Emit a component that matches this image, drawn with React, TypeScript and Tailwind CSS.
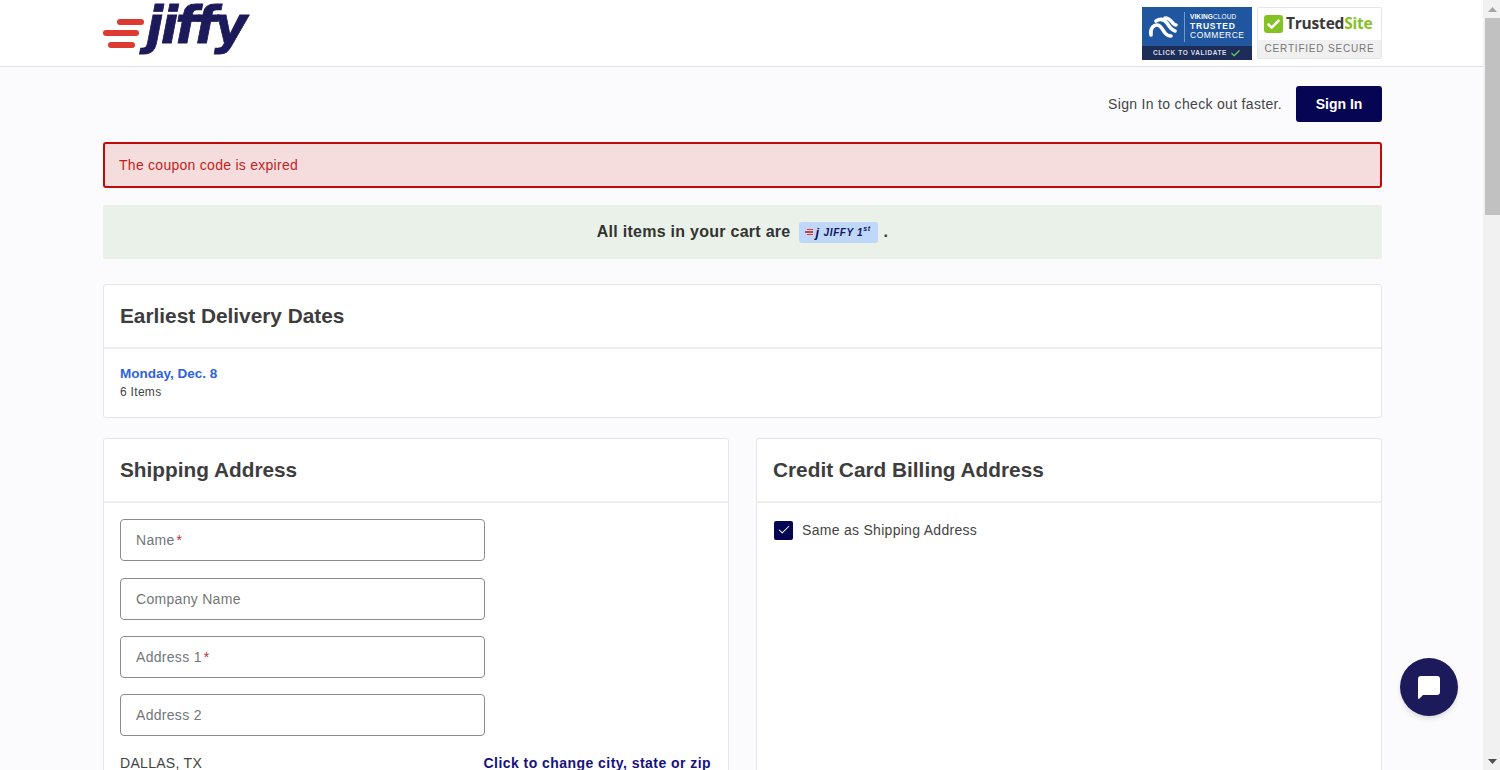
import { Check } from 'lucide-react'

function VikingBadge(): JSX.Element {
  return (
    <div className="w-[110px] h-[53px] flex flex-col bg-[#20569f]">
      <div className="h-[39px] flex items-center pl-[6px]">
        <svg className="w-[31px] h-[24px]" viewBox="0 0 31 24" fill="none" stroke="#fff" strokeWidth="3.6" strokeLinecap="round">
          <path d="M3 20C2 14 5 10 9 10c4 0 5 4 8 8 2 2.500 4 3 6 3" />
          <path d="M8 6c4-2.500 8-2 11 2 2 3 4 7 8 8" />
          <path d="M17 3c3 0 5 1.500 7 4 1.500 2 2.500 3 4 3" />
        </svg>
        <div className="w-px h-[30px] bg-[#6f9bd3] ml-[5px] mr-[5px]" />
        <div className="flex flex-col text-white leading-none">
          <span className="text-[6.500px] font-bold tracking-[0.1px]">
            VIKING<span className="font-normal">CLOUD</span>
          </span>
          <span className="text-[8.500px] font-bold tracking-[0.8px] mt-[2px]">TRUSTED</span>
          <span className="text-[8.500px] tracking-[0.5px]">COMMERCE</span>
        </div>
      </div>
      <div className="h-[14px] bg-[#1d2d57] flex items-center justify-center gap-[3px] text-[#d9dee8] text-[6.500px] font-bold tracking-[0.6px]">
        CLICK TO VALIDATE
        <Check className="w-[11px] h-[11px] text-[#5fc26a]" strokeWidth={3} />
      </div>
    </div>
  )
}

function TrustedSiteBadge(): JSX.Element {
  return (
    <div className="w-[125px] h-[52px] flex flex-col bg-white border border-[#e6e6e6] rounded-[2px]">
      <div className="h-[32px] shrink-0 flex items-center pl-[6px] gap-[3px]">
        <div className="w-[19px] h-[18px] rounded-[3px] bg-[#84c225] flex items-center justify-center">
          <Check className="w-[15px] h-[15px] text-white" strokeWidth={4} />
        </div>
        <span className="text-[15.500px] font-bold tracking-[-0.2px] whitespace-nowrap text-[#3a3a3a] font-['Open_Sans',sans-serif]">
          Trusted<span className="text-[#84c225]">Site</span>
        </span>
      </div>
      <div className="flex-1 bg-[#f0f0f0] flex items-center justify-center whitespace-nowrap text-[10px] tracking-[0.8px] text-[#777] pb-[1px]">
        CERTIFIED SECURE
      </div>
    </div>
  )
}

function Logo(): JSX.Element {
  return (
    <div className="flex items-center">
      <div className="flex flex-col gap-[5.500px] w-[41px] shrink-0">
        <div className="w-[27px] h-[6px] rounded-full bg-[#dd3b32] ml-[14px]" />
        <div className="w-[36px] h-[6px] rounded-full bg-[#dd3b32]" />
        <div className="w-[27px] h-[6px] rounded-full bg-[#dd3b32] ml-[5px]" />
      </div>
      <span className="text-[51px] leading-[50px] font-bold italic text-[#1d1a5b] tracking-[-2.800px] [-webkit-text-stroke:0.8px_#1d1a5b] ml-[2px] mb-[14px] font-['DejaVu_Sans',sans-serif]">
        jiffy
      </span>
    </div>
  )
}

function Field({ label, required }: { label: string; required?: boolean }): JSX.Element {
  return (
    <div className="w-[365px] h-[42px] shrink-0 flex items-center px-[15px] bg-white border border-[#8c8c8c] rounded-[4px] text-sm tracking-[0.3px] text-[#757575]">
      {label}
      {required && <span className="text-[#c0272d] ml-[2px]">*</span>}
    </div>
  )
}

function CardHeader({ title }: { title: string }): JSX.Element {
  return (
    <div className="h-[64px] shrink-0 flex items-center px-4 border-b-2 border-[#eeeeee]">
      <h2 className="text-[20.800px] font-bold text-[#3d3d3d]">{title}</h2>
    </div>
  )
}

export default function App(): JSX.Element {
  return (
    <div className="relative h-[770px] flex overflow-hidden bg-[#fbfbfe] font-['Liberation_Sans',Arial,sans-serif]">
      <div className="flex-1 min-w-0 flex flex-col">
        {/* Header */}
        <header className="h-[67px] shrink-0 bg-white border-b border-[#e2e2e2]">
          <div className="w-[1279px] h-full ml-[103px] flex items-center justify-between">
            <Logo />
            <div className="flex gap-[5px] items-start self-start pt-[7px]">
              <VikingBadge />
              <TrustedSiteBadge />
            </div>
          </div>
        </header>

        <main className="w-[1279px] ml-[103px] flex flex-col">
          {/* Sign in */}
          <div className="mt-[19px] flex items-center justify-end gap-[14px]">
            <span className="text-sm tracking-[0.32px] text-[#444444]">Sign In to check out faster.</span>
            <button className="w-[86px] h-[36px] rounded-[3px] bg-[#050554] text-white text-sm font-bold">Sign In</button>
          </div>

          {/* Coupon error */}
          <div className="mt-[20px] h-[46px] flex items-center px-[14px] bg-[#f5dddd] border-2 border-[#c10b0b] rounded-[3px] text-sm tracking-[0.27px] text-[#c21f1f]">
            The coupon code is expired
          </div>

          {/* Jiffy 1st notice */}
          <div className="mt-[17px] h-[54px] flex items-center justify-center bg-[#e9f1e8] rounded-[2px] text-base font-bold tracking-[0.27px] text-[#333333]">
            All items in your cart are
            <span className="ml-[8px] mr-[6px] w-[79px] h-[21px] flex items-center justify-center gap-[2px] rounded-[3px] bg-[#bfd7f9] text-[#15155c] text-[10px] italic tracking-[0.6px]">
              <span className="flex flex-col gap-[1px] items-end">
                <span className="w-[6px] h-[1.500px] bg-[#dd3b32]" />
                <span className="w-[8px] h-[1.500px] bg-[#dd3b32]" />
                <span className="w-[6px] h-[1.500px] bg-[#dd3b32]" />
              </span>
              <span className="text-[13px] font-black leading-none mr-[2px]">j</span>
              <span>
                JIFFY 1<span className="text-[7px] align-top leading-none">st</span>
              </span>
            </span>
            .
          </div>

          {/* Delivery dates */}
          <section className="mt-[25px] h-[134px] flex flex-col bg-white border border-[#e6e6e6] rounded-[3px]">
            <CardHeader title="Earliest Delivery Dates" />
            <div className="px-4 pt-[16px] flex flex-col">
              <span className="text-[13.500px] leading-[18px] font-bold text-[#2f62e0]">Monday, Dec. 8</span>
              <span className="text-xs leading-[18px] tracking-[0.3px] text-[#444444]">6 Items</span>
            </div>
          </section>

          <div className="mt-[20px] flex justify-between items-start">
            {/* Shipping */}
            <section className="w-[626px] h-[400px] flex flex-col bg-white border border-[#e6e6e6] rounded-[3px]">
              <CardHeader title="Shipping Address" />
              <div className="px-4 pt-[16px] flex flex-col gap-4">
                <div className="mb-px">
                  <Field label="Name" required />
                </div>
                <Field label="Company Name" />
                <Field label="Address 1" required />
                <Field label="Address 2" />
                <div className="flex items-center justify-between text-sm leading-[18px] mt-[2px]">
                  <span className="tracking-[0.3px] text-[#444444]">DALLAS, TX</span>
                  <span className="font-bold tracking-[0.45px] text-[#17127d] mr-[1px]">Click to change city, state or zip</span>
                </div>
              </div>
            </section>

            {/* Billing */}
            <section className="w-[626px] h-[400px] flex flex-col bg-white border border-[#e6e6e6] rounded-[3px]">
              <CardHeader title="Credit Card Billing Address" />
              <div className="pl-[17px] pt-[17px] flex items-center gap-[9px] text-sm tracking-[0.29px] text-[#444444]">
                <span className="w-[19px] h-[19px] rounded-[2px] bg-[#050554] flex items-center justify-center">
                  <Check className="w-[14px] h-[14px] text-white" strokeWidth={1.75} />
                </span>
                Same as Shipping Address
              </div>
            </section>
          </div>
        </main>
      </div>

      {/* Scrollbar */}
      <div className="w-[17px] shrink-0 flex flex-col pl-[2px] bg-[#f1f1f1]">
        <div className="h-[18px] shrink-0 flex items-center justify-center">
          <svg className="w-[9px] h-[5px]" viewBox="0 0 9 5"><path d="M4.500 0L9 5H0z" fill="#a3a3a3" /></svg>
        </div>
        <div className="w-full h-[197px] shrink-0 bg-[#c1c1c1]" />
        <div className="flex-1" />
        <div className="h-[17px] shrink-0 flex items-center justify-center">
          <svg className="w-[9px] h-[5px]" viewBox="0 0 9 5"><path d="M0 0h9L4.500 5z" fill="#505050" /></svg>
        </div>
      </div>

      {/* Chat bubble */}
      <button className="absolute left-[1400px] top-[658px] w-[58px] h-[58px] rounded-full bg-[#1d1a5b] shadow-md flex items-center justify-center">
        <svg className="w-[22px] h-[23px]" viewBox="0 0 22 23">
          <path d="M3 0h16a3 3 0 0 1 3 3v13a3 3 0 0 1-3 3H5l-4 4a1 1 0 0 1-1-1V3a3 3 0 0 1 3-3z" fill="#fff" />
        </svg>
      </button>
    </div>
  )
}
